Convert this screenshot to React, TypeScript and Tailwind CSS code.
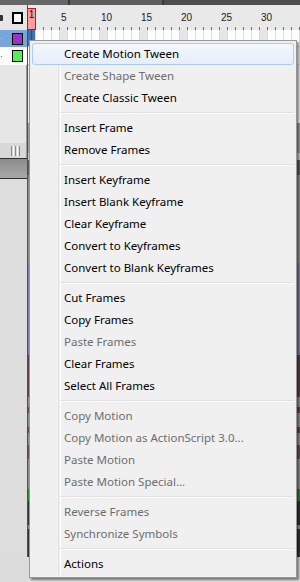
import React from 'react';

type Item = { label: string; disabled?: boolean; active?: boolean } | 'sep';

const menuItems: Item[] = [
  { label: 'Create Motion Tween', active: true },
  { label: 'Create Shape Tween', disabled: true },
  { label: 'Create Classic Tween' },
  'sep',
  { label: 'Insert Frame' },
  { label: 'Remove Frames' },
  'sep',
  { label: 'Insert Keyframe' },
  { label: 'Insert Blank Keyframe' },
  { label: 'Clear Keyframe' },
  { label: 'Convert to Keyframes' },
  { label: 'Convert to Blank Keyframes' },
  'sep',
  { label: 'Cut Frames' },
  { label: 'Copy Frames' },
  { label: 'Paste Frames', disabled: true },
  { label: 'Clear Frames' },
  { label: 'Select All Frames' },
  'sep',
  { label: 'Copy Motion', disabled: true },
  { label: 'Copy Motion as ActionScript 3.0...', disabled: true },
  { label: 'Paste Motion', disabled: true },
  { label: 'Paste Motion Special...', disabled: true },
  'sep',
  { label: 'Reverse Frames', disabled: true },
  { label: 'Synchronize Symbols', disabled: true },
  'sep',
  { label: 'Actions' },
];

// colour bands of the stage that peek out on the right of the menu
const stageBands: [number, string][] = [
  [58, '#efefef'],
  [30, '#9a9a9a'],
  [7, '#c4c8cc'],
  [15, '#5c5c5c'],
  [88, '#8e8e8e'],
  [92, '#7b7ba8'],
  [42, '#5e3c4e'],
  [10, '#8e8e8e'],
  [6, '#6a4252'],
  [14, '#8e8e8e'],
  [6, '#6a4252'],
  [12, '#8e8e8e'],
  [14, '#6c4c5a'],
  [30, '#8e8e8e'],
  [12, '#1e8c2c'],
  [24, '#333333'],
  [4, '#8e8e8e'],
  [28, '#333333'],
];

const frames = Array.from({ length: 34 }, (_, i) => i + 1);

function Ruler() {
  return (
    <div className="flex h-[25px] bg-[#e9e9e9]">
      {frames.map((n) => (
        <div key={n} className="flex h-full w-[8px] flex-none flex-col justify-between">
          <div className="h-[18px] whitespace-nowrap pl-[1px] pt-[9px] text-[10px] leading-[8px] text-[#1a1a1a]">
            {n % 5 === 0 ? n : ''}
          </div>
          <div className="h-[3px] border-r border-[#6e6e6e]" />
        </div>
      ))}
    </div>
  );
}

function FrameRow({ h, selected }: { h: string; selected?: boolean }) {
  return (
    <div className={`flex ${h} border-b border-[#d4d4d4] bg-white`}>
      {frames.map((n) => (
        <div
          key={n}
          className={`h-full w-[8px] flex-none border-r border-[#dcdcdc] ${
            n === 1 && selected ? 'bg-[#3f6fb0]' : n % 5 === 0 ? 'bg-[#e6e6e6]' : 'bg-white'
          }`}
        />
      ))}
    </div>
  );
}

export default function App() {
  return (
    <div className="relative h-[582px] w-[300px] overflow-hidden bg-[#dcdcdc] font-['Liberation_Sans',sans-serif]">
      {/* panel tabs */}
      <div className="flex h-[5px] bg-[#4e4e4e]">
        <div className="w-[70px] border-r-2 border-[#3a3a3a] bg-[#666666]" />
        <div className="w-[94px] border-r-2 border-[#3a3a3a] bg-[#5e5e5e]" />
      </div>

      <div className="flex">
        {/* layer column */}
        <div className="flex w-[27px] flex-none flex-col">
          <div className="relative flex h-[25px] items-center bg-[#e6e6e6]">
            <div className="ml-[-2px] h-[6px] w-[5px] rounded-[1px] bg-[#333333]" />
            <div className="ml-[9px] h-[12px] w-[11px] border-2 border-black bg-white" />
          </div>
          <div className="flex h-[17px] items-center bg-[#78a5da]">
            <div className="ml-[1px] h-[1px] w-[1px] bg-white" />
            <div className="ml-[10px] h-[12px] w-[11px] border border-black bg-[#9b33c9]" />
          </div>
          <div className="flex h-[18px] items-center bg-white">
            <div className="ml-[1px] h-[1px] w-[1px] bg-[#666666]" />
            <div className="ml-[10px] h-[12px] w-[11px] border border-black bg-[#55ee55]" />
          </div>
          <div className="h-[78px] border-r border-[#9a9a9a] bg-[#e6e6e6]" />
          <div className="flex h-[15px] justify-end border-r border-[#9a9a9a] bg-[#d8d8d8] pr-[6px] pt-[3px]">
            <div className="flex h-[10px] gap-[1px]">
              <div className="w-[1px] bg-[#8a8a8a]" />
              <div className="w-[1px] bg-white" />
              <div className="w-[1px] bg-[#8a8a8a]" />
              <div className="w-[1px] bg-white" />
              <div className="w-[1px] bg-[#8a8a8a]" />
            </div>
          </div>
          <div className="h-[21px] border-y border-[#2e2e2e] bg-gradient-to-b from-[#8c8c8c] to-[#a9a9a9]" />
          <div className="flex-1 bg-[#dddddd]" />
        </div>

        {/* frames area */}
        <div className="relative flex flex-1 flex-col border-l border-[#505050]">
          <Ruler />
          <FrameRow h="h-[17px]" selected />
          <FrameRow h="h-[18px]" />
          <div className="flex flex-col bg-black">
            {stageBands.map(([hgt, c], i) => (
              <div key={i} style={{ height: hgt, background: c }} />
            ))}
          </div>
          {/* playhead */}
          <div className="absolute left-[-1px] top-[3px] flex h-[22px] w-[9px] justify-center border border-[#d01010] bg-[#ff9c9c] text-[10px] leading-[12px] text-[#111]">
            1
          </div>
          <div className="absolute left-[3px] top-[25px] h-[20px] w-[1px] bg-[#d01010]" />
        </div>
      </div>

      {/* context menu */}
      <div className="absolute left-[29px] top-[40px] w-[268px] border border-[#979797] bg-[#f0f0f0] p-[2px] font-['Noto_Sans',sans-serif] text-[11.5px] shadow-[2px_2px_2px_rgba(0,0,0,0.45)]">
        <div className="absolute bottom-[2px] left-[28px] top-[2px] w-[2px] border-l border-[#e2e3e3] shadow-[1px_0_0_#ffffff]" />
        <div className="relative flex flex-col">
          {menuItems.map((it, i) =>
            it === 'sep' ? (
              <div key={i} className="flex h-[8px] items-center pl-[28px]">
                <div className="h-[2px] w-full border-t border-[#e0e0e0] bg-white" />
              </div>
            ) : (
              <div
                key={i}
                className={`flex h-[22px] items-center rounded-[3px] border pl-[31px] ${
                  it.active
                    ? 'border-[#aacdf4] bg-gradient-to-b from-[#f3f7fc] to-[#e6eefa]'
                    : 'border-transparent'
                } ${it.disabled ? 'text-[#6d6d6d]' : 'text-black'}`}
              >
                {it.label}
              </div>
            ),
          )}
        </div>
      </div>
    </div>
  );
}
